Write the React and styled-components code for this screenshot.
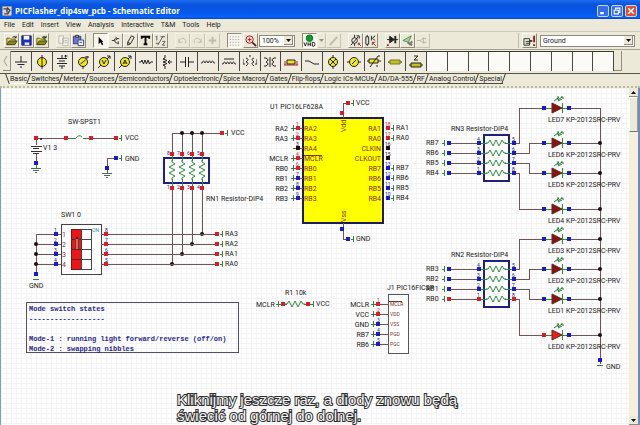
import React, { useState } from 'react';
import styled, { createGlobalStyle, ThemeProvider, css } from 'styled-components';

const theme = {
    fonts: {
        ui: 'Roboto, "Liberation Sans", sans-serif',
        title: '"Open Sans", "Noto Sans", sans-serif',
        note: '"Liberation Mono", monospace',
        caption: '"Liberation Sans", Arial, sans-serif',
    },
    colors: {
        face: '#ece9d8',
        shadow: '#8f8c7c',
        wire: '#6e5555',
        navy: '#20207c',
        green: '#2a8a3c',
        red: '#dd1a26',
        blue: '#1a1ac8',
    },
};

const { wire: WIRE, navy: NAVY, green: GREEN, red: RED, blue: BLUE } = theme.colors;
const BLACK = '#1c1014';

const GlobalStyle = createGlobalStyle`
    * { box-sizing: border-box; }
    body { margin: 0; overflow: hidden; }
    button, select { font: inherit; color: inherit; margin: 0; padding: 0; border: 0; background: none; }
    svg { display: block; }
`;

const Window = styled.div`
    position: relative;
    display: flex;
    flex-direction: column;
    height: 100vh;
    font: 7px/10px ${({ theme }) => theme.fonts.ui};
    color: #1a1a1a;
    background: ${({ theme }) => theme.colors.face};
`;

const TitleBar = styled.header`
    display: flex;
    align-items: center;
    gap: 2px;
    height: 19px;
    padding: 2px 3px 0 2px;
    background: linear-gradient(#1c6cf0, #0a52dc 25%, #0558ec 70%, #0a62fa 90%, #0344c4);
`;

const Title = styled.h1`
    flex: 1;
    margin: 0;
    padding-left: 1px;
    font: bold 8px/12px ${({ theme }) => theme.fonts.title};
    color: white;
    white-space: nowrap;
`;

const WindowButton = styled.button`
    width: 12px;
    height: 12px;
    border: 1px solid #c6d6f8 !important;
    border-radius: 2px;
    background: ${({ $close }) => ($close ? '#dc5230' : '#3a6ce4')} !important;
`;

const MenuBar = styled.nav`
    display: flex;
    gap: 7px;
    height: 12px;
    padding-left: 4px;
`;

const Toolbar = styled.div`
    display: flex;
    align-items: center;
    height: 19px;
    padding: 0 5px 0 4px;
    border-top: 1px solid #cdc9b8;
    border-bottom: 1px solid #a5a292;
`;

const Group = styled.div`
    display: flex;
    align-items: center;
    gap: ${({ $gap = 0 }) => $gap}px;
    margin-right: 7px;
`;

const RightGroup = styled(Group)`
    margin: 0 0 0 auto;
    padding-left: 3px;
    border-left: 1px solid #c0bcaa;
`;

const ToolButton = styled.button`
    display: grid;
    place-items: center;
    width: ${({ $narrow }) => ($narrow ? 9 : 15)}px;
    height: 15px;
    border-style: solid !important;
    border-width: 1px !important;
    border-color: #fbfaf4 #8f8c7c #8f8c7c #fbfaf4 !important;
    ${({ $pressed }) => $pressed && css`
        border-color: #8f8c7c #fbfaf4 #fbfaf4 #8f8c7c !important;
        background: #f6f4ec !important;
    `}
    ${({ $dim }) => $dim && css`opacity: 0.4;`}
`;

const Combo = styled.label`
    display: flex;
    align-items: center;
    width: ${({ $wide }) => ($wide ? 95 : 36)}px;
    height: 12px;
    padding: 0 1px;
    border: 1px solid #8d8a7e;
    background: white;

    select {
        flex: 1;
        min-width: 0;
        height: 10px;
        padding-left: 1px;
        appearance: none;
        outline: none;
    }
`;

const ComboArrow = styled.span`
    display: grid;
    place-items: center;
    width: 9px;
    height: 9px;
    border-right: 1px solid #8d8a7e;
    border-bottom: 1px solid #8d8a7e;
    background: ${({ theme }) => theme.colors.face};
`;

const Palette = styled.div`
    display: flex;
    height: 24px;
    padding: 1px 18px 2px 3px;
    border-bottom: 1px solid #55534a;
`;

const PaletteScroll = styled.button`
    width: 8px;
    border-right: 1px solid #8f8c7c !important;
    border-bottom: 1px solid #8f8c7c !important;
    color: #a29f8e;
`;

const Cells = styled.div`
    flex: 1;
    display: flex;
    border-top: 1px solid #3c3a34;
`;

const Cell = styled.button`
    flex: 1;
    display: grid;
    place-items: center;
    border-right: 1px solid #4a4842 !important;
    background: ${({ $empty }) => ($empty ? '#fbfaf6' : '#efecdf')} !important;
`;

const Tabs = styled.div`
    display: flex;
    height: 14px;
    padding: 0 0 2px 7px;
    border-bottom: 2px dotted #bcb99c;
`;

const Tab = styled.button`
    position: relative;
    height: 10px;
    padding: 0 1px 0 3px !important;
    border-bottom: 1px solid ${({ $active }) => ($active ? 'white' : '#4a4842')} !important;
    white-space: nowrap;
    line-height: 10px !important;

    &::after {
        content: '';
        position: absolute;
        right: -1px;
        top: 0;
        height: 10px;
        border-left: 1px solid #3a3832;
        transform: skewX(-20deg);
    }
    ${({ $active }) => $active && css`
        &::before {
            content: '';
            position: absolute;
            left: 0;
            top: 0;
            height: 10px;
            border-left: 1px solid #3a3832;
            transform: skewX(20deg);
        }
    `}
`;

const Workspace = styled.main`
    flex: 1;
    min-height: 0;
    display: flex;
    border-left: 1px solid #7ba0bc;
    border-right: 2px solid #7089bf;
`;

const Sheet = styled.div`
    position: relative;
    flex: 1;
    min-width: 0;
    overflow: hidden;
    background: #fefefe;
    background-image:
        linear-gradient(#f3f3f3 1px, transparent 1px),
        linear-gradient(90deg, #f3f3f3 1px, transparent 1px);
    background-size: 5px 5px;
`;

const Note = styled.pre`
    position: absolute;
    left: 25px;
    top: 214px;
    width: 213px;
    height: 51px;
    margin: 0;
    padding: 1px 2px;
    border: 1px solid #55505e;
    font: bold 7px/10px ${({ theme }) => theme.fonts.note};
    color: #28288c;
`;

const ScrollBar = styled.div`
    display: flex;
    flex-direction: column;
    width: 9px;
    background: #f5efdc;
`;

const ScrollButton = styled.button`
    display: grid;
    place-items: center;
    height: 9px;
    border-bottom: 1px solid #8f8c7c !important;
    background: #ece9d8 !important;
`;

const Thumb = styled.div`
    height: 35px;
    margin-bottom: auto;
    border: 1px solid;
    border-color: #ffffff #a09d8c #77756a #ffffff;
    background: #ece9d8;
`;

const Caption = styled.p`
    position: absolute;
    left: 177px;
    bottom: 1px;
    margin: 0;
    font: 15px/16px ${({ theme }) => theme.fonts.caption};
    color: #f4f4f4;
    -webkit-text-stroke: 2px #2c2c2c;
    paint-order: stroke fill;
`;

// small icons, all on a 14 unit grid

const Icon = ({ size = 13, children }) => (
    <svg width={size} height={size} viewBox="0 0 14 14" fill="none" stroke="#222" aria-hidden="true">
        {children}
    </svg>
);

const Arrow = ({ up }) => (
    <svg width="5" height="3" viewBox="0 0 5 3" aria-hidden="true">
        <path d={up ? 'M0 3 2.500 0 5 3z' : 'M0 0h5L2.500 3z'} fill="#111" />
    </svg>
);

const Folder = () => (
    <>
        <path d="M2 11.500V4.500h3l1 1h5v2" fill="#f0dc50" stroke="#5a5a18" />
        <path d="M2 11.500 4.500 7.500h8.500L10.500 11.500z" fill="#8a8a20" stroke="#3c3c10" />
        <path d="M8 3.500q2.500-2 4 .5m0-2v2h-2" stroke="#222" />
    </>
);

const TOOL_ICONS = {
    open: <Folder />,
    save: (
        <>
            <path d="M2 2h10v10H2z" fill="#1830c0" stroke="#101c70" />
            <path d="M4 2h6v4H4z" fill="#fff" stroke="none" />
            <path d="M5 9h5v3H5z" fill="#ddd" stroke="none" />
        </>
    ),
    reopen: (
        <>
            <Folder />
            <path d="M7 3h4v4z" fill="#287828" stroke="none" />
        </>
    ),
    copy: <path d="M2 2h5v8H2zM6 4.500h6v8H6zM8 7h3M8 9h3" fill="#fff" stroke="#777" />,
    paste: (
        <>
            <path d="M1.500 2.500h8v8h-8z" fill="#6c78c8" stroke="#303880" />
            <path d="M4 1.500h3v2H4z" fill="#eee" />
            <path d="M6.500 6.500h6v6h-6zM8 9h3" fill="#fff" stroke="#2838a0" />
        </>
    ),
    pointer: <path d="M5 3v8l2-2 1.500 3 1.500-1-1.500-2.500H10z" fill="#000" stroke="none" />,
    gate: <path d="M3 7h3M11 5H8Q5 5 6 7q0 3 4 3M7 3l2 2-2 2M10 8v3" stroke="#333" />,
    pencil: <path d="M4 12V9l4-7 3 1.500-4 7zM4 9l3 1.500" fill="#e8e4d0" />,
    text: <path d="M3 5V3h8v2M7 3v8M5 11h4" stroke="#000" strokeWidth="2" />,
    ratio: <path d="M2 3l1-1v5M10 2 4 12M9 8h3l-3 4h3M7 3h5M2 10h3" stroke="#555" />,
    undo: <path d="M3 5v4h4M3 9q2-6 6-4 3 2 1 5" stroke="#777" />,
    redo: <path d="M11 5v4H7M11 9Q9 3 5 5q-3 2-1 5" stroke="#777" />,
    plus: <path d="M7 3v8M3 7h8" stroke="#777" strokeWidth="2" />,
    grid: <path d="M2 3h11M2 6h11M2 9h11M2 12h11" stroke="#888" strokeDasharray="1 2" />,
    zoom: (
        <>
            <circle cx="6" cy="6" r="4" fill="#f4d8d8" stroke="#8c2020" />
            <path d="M4 6h4M6 4v4" stroke="#c01818" />
            <path d="M9 9l4 4" stroke="#602020" strokeWidth="2" />
        </>
    ),
    vhd: (
        <>
            <circle cx="7" cy="4.500" r="3.500" fill="#0c9c30" stroke="#0a6c20" />
            <path d="M1 9l1.500 4L4 9M5.500 9v4M8 9v4M5.500 11H8M10 9v4h2l1-2-1-2z" stroke="#222" />
        </>
    ),
    probe: <path d="M3 12 11 3" stroke="#777" strokeWidth="2" />,
    meter: (
        <>
            <circle cx="6" cy="7" r="3" />
            <path d="M2 12 10 3M8 2h3v3M6 1v3M6 10v3" />
            <path d="M10 10l3 3M10 12v-2h2" stroke="#a82828" />
        </>
    ),
    resistorTool: (
        <>
            <path d="M2 3h3v8H2zM3.500 1v2M3.500 11v2M8 2v5M12 2 9 4.500 12 7" />
            <path d="M9 9l4 4M9 12V9h3" stroke="#a82828" />
        </>
    ),
    diodeTool: (
        <>
            <path d="M1 6h12" />
            <path d="M4 2.500v7L9 6z" fill="#222" />
            <path d="M10 2v8" strokeWidth="2" />
            <path d="M1 11h2v2H1z" fill="#c81c1c" stroke="none" />
        </>
    ),
    brush: (
        <>
            <path d="M2 7 11 2 8 9z" fill="#aad0a4" stroke="#5a8a54" />
            <path d="M7 9l5 3M9 12l3-4" stroke="#777" strokeWidth="2" />
        </>
    ),
    lamp: <path d="M1 7h4l3-3v6L5 7M8 5h3M8 9h3" stroke="#666" />,
    hand: (
        <>
            <path d="M1 5h6v7H1zM7 7h3M3 8h7M3 10h5" stroke="#333" />
            <path d="M12 2v7M12 11v2" stroke="#7c2020" strokeWidth="2" />
        </>
    ),
};

const YELLOW = '#f2e818';

const PALETTE = [
    ['Ground', <path d="M7 1v6M1 7h12M3.500 9.500h7M6 12h2" />],
    ['Voltage source', <><circle cx="7" cy="7" r="4.500" fill={YELLOW} /><path d="M7 0v14" /></>],
    ['Battery', <path d="M7 0v3M2 3.500h10M4 6h6M2 8.500h10M4 11h6M7 11v3M10.500 0v2.500M9.500 1h3" />],
    ['Generator', <><circle cx="7" cy="7" r="4.500" fill={YELLOW} /><path d="M4.500 9 9.500 5M11 1v3M9 2h4M7 11v3" /></>],
    ['Voltmeter', <><circle cx="7" cy="7" r="4.500" fill={YELLOW} /><path d="M5 5l2 4 2-4M1 13l3-3M10 4l3-3M10 1h3v3" /></>],
    ['Ammeter', <><circle cx="7" cy="7" r="4.500" fill={YELLOW} /><path d="M5 9l2-4 2 4M6 8h2M1 13l3-3M10 4l3-3M10 1h3v3" /></>],
    ['Resistor', <path d="M0 7h2l1-2 1.500 4L6 5l1.500 4L9 5l1.500 4 1-2H14" />],
    ['Potentiometer', <path d="M6 0v3l-2 1 4 1.500L4 7l4 1.500L4 10l2 1v3M13 7H9M11 5 9 7l2 2" />],
    ['Capacitor', <path d="M0 7h5.500M8.500 7H14M5.500 2v10M8.500 2v10" />],
    ['Inductor', <path d="M0 8h1q1.500-4 3 0 1.500-4 3 0 1.500-4 3 0 1.500-4 3 0h1" />],
    ['Core inductor', <path d="M0 9h1q1.500-4 3 0 1.500-4 3 0 1.500-4 3 0 1.500-4 3 0h1M2 4h10" />],
    ['Coupled inductors', <path d="M0 4v5h2M3 3q4 1 0 4 4 1 0 4M11 3q-4 1 0 4-4 1 0 4M14 4v5h-2M6 1h2" />],
    ['Transformer', <path d="M1 3h2q4 2 0 4 4 2 0 4H1M13 3h-2q-4 2 0 4-4 2 0 4h2M7 2v10" />],
    ['Relay', <><path d="M0 10h14M1 10V6M13 10V6" stroke="#a82020" /><path d="M3 5h8v4H3z" fill={YELLOW} /></>],
    ['Switch', <path d="M0 6h4l5 3M9 9h5" />],
    ['Lamp', <><circle cx="7" cy="7" r="4.500" fill={YELLOW} /><path d="M4 4l6 6M10 4l-6 6M7 0v2M7 12v2" /></>],
    ['Motor', <><path d="M0 7h14" /><circle cx="7" cy="7" r="4.500" fill={YELLOW} /><path d="M5 9 9 5" /></>],
    ['Thermistor', <><path d="M0 6h14" /><path d="M2 4h9v4H2z" fill={YELLOW} /><path d="M3 12 11 1h2M10 12v-2" /></>],
    ['Fuse', <><path d="M0 7h14" /><path d="M2 5h10v4H2z" fill="#c4c020" stroke="#77741c" /></>],
    ['Impedance', <><path d="M0 10h14" /><path d="M2 8h10v4H2z" fill="#c4c020" /><path d="M5 1h4L5 5h4" /></>],
];

const MENUS = ['File', 'Edit', 'Insert', 'View', 'Analysis', 'Interactive', 'T&M', 'Tools', 'Help'];

const TABS = [
    'Basic', 'Switches', 'Meters', 'Sources', 'Semiconductors', 'Optoelectronic', 'Spice Macros',
    'Gates', 'Flip-flops', 'Logic ICs-MCUs', 'AD/DA-555', 'RF', 'Analog Control', 'Special',
];

// schematic parts

const Label = styled.text`
    font: ${({ $size = 7 }) => $size}px ${({ theme }) => theme.fonts.ui};
    fill: ${({ $color = '#222' }) => $color};
    text-anchor: ${({ $end }) => ($end ? 'end' : 'start')};
`;

const Wire = styled.path`
    fill: none;
    stroke: ${({ $color = WIRE }) => $color};
    stroke-width: ${({ $width = 1 }) => $width};
    shape-rendering: ${({ $smooth }) => ($smooth ? 'auto' : 'crispEdges')};
`;

const Pin = ({ x, y, color = BLUE }) => (
    <rect x={x - 2} y={y - 2} width="4" height="4" fill={color} />
);

const Joint = ({ x, y }) => <circle cx={x} cy={y} r="2" fill={BLACK} />;

const Tick = ({ x, y }) => <Wire d={`M${x} ${y - 3}v6M${x - 2} ${y}h2`} $color={GREEN} />;

const Ground = ({ x, y }) => (
    <Wire d={`M${x - 5} ${y}h10M${x - 3} ${y + 2}h6M${x - 1} ${y + 4}h2`} $color="#4a6a50" />
);

const Zigzag = ({ x, y, vertical }) => (
    <g transform={vertical ? `translate(${x} ${y}) rotate(90)` : `translate(${x} ${y})`}>
        <Wire d="M-1 0h2l2-3 3 6 3-6 3 6 3-6 2 3h2" $color={GREEN} $smooth />
    </g>
);

const PinNumber = ({ x, y, color = NAVY, children }) => (
    <Label x={x} y={y} $size={5} $color={color}>{children}</Label>
);

const LEDS = [
    [108, 'LED7'], [143, 'LED6'], [173, 'LED5'], [209, 'LED4'],
    [239, 'LED3'], [269, 'LED2'], [299, 'LED1'], [335, 'LED0'],
];

const Led = ({ y, name }) => {
    const lit = name === 'LED0';
    return (
        <g>
            <Wire d={`M569 ${y}h31`} />
            <Wire d={`M544 ${y}h25`} $color={GREEN} />
            <path d={`M552 ${y - 5}v10l10-5z`} fill={lit ? '#f01c1c' : '#8c1010'} stroke="#5c2c1c" strokeWidth="1" />
            <Wire d={`M562 ${y - 5}v10`} $color={GREEN} />
            <Wire
                d={`M554 ${y - 7}l4-3v2l4-3M557 ${y - 11}h2l-2 2M561 ${y - 11}h2v2M558 ${y - 7}l4-2`}
                $color="#1e7a30"
                $smooth
            />
            <Pin x={544} y={y} color={lit ? RED : BLUE} />
            <Pin x={569} y={y} />
            {y > 108 && <Joint x={600} y={y} />}
            <Label x={548} y={y + 14}>{`${name} KP-2012SRC-PRV`}</Label>
        </g>
    );
};

// four resistors in one package, with the nets that feed it and the leads to its LEDs
const ResistorPack = ({ top, name, nets, hot, leds }) => (
    <g>
        <Label x={451} y={top - 4}>{name}</Label>
        <rect x="484" y={top} width="25" height="46" fill="#fff" stroke={NAVY} strokeWidth="2" />
        {nets.map((net, i) => {
            const y = top + 8 + i * 10;
            const color = net === hot ? RED : BLUE;
            return (
                <g key={net}>
                    <Label x={426} y={y + 2}>{net}</Label>
                    <Tick x={444} y={y} />
                    <Wire d={`M449 ${y}h30`} />
                    <Wire d={`M479 ${y}h8M505 ${y}h9`} $color={GREEN} />
                    <Zigzag x={487} y={y} />
                    <Wire d={`M514 ${y}H${i === 0 || i === 3 ? 519 : 529}V${leds[i]}H544`} />
                    <Pin x={449} y={y} color={color} />
                    <Pin x={479} y={y} color={color} />
                    <Pin x={514} y={y} color={color} />
                    <PinNumber x={477} y={y - 2}>{4 - i}</PinNumber>
                    <PinNumber x={512} y={y - 2}>{i + 5}</PinNumber>
                </g>
            );
        })}
    </g>
);

const CHIP_LEFT = [
    ['RA2', RED, 1], ['RA3', RED, 2], ['RA4', BLACK, 3], ['MCLR', RED, 4],
    ['RB0', RED, 6], ['RB1', BLUE, 7], ['RB2', BLUE, 8], ['RB3', BLUE, 9],
];
const CHIP_RIGHT = [
    ['RA1', RED, 18], ['RA0', RED, 17], ['CLKIN', BLACK, 16], ['CLKOUT', BLACK, 15],
    ['RB7', BLUE, 13], ['RB6', BLUE, 12], ['RB5', BLUE, 11], ['RB4', BLUE, 10],
];

const Chip = () => (
    <g>
        <Label x={270} y={109}>U1 PIC16LF628A</Label>
        <rect x="303" y="118" width="80" height="105" fill="#ffff00" stroke="#1c1c5c" strokeWidth="2" />
        <Wire d="M343 118v-15h5M343 223v16h5" />
        <Pin x={342} y={113} color={RED} />
        <Pin x={348} y={103} color={RED} />
        <Tick x={353} y={103} />
        <Label x={356} y={105}>VCC</Label>
        <Pin x={342} y={229} />
        <Pin x={348} y={239} />
        <Tick x={353} y={239} />
        <Label x={356} y={241}>GND</Label>
        <Label $color="#7c3414" transform="translate(346 132) rotate(-90)">Vdd</Label>
        <Label $color="#7c3414" transform="translate(346 222) rotate(-90)">Vss</Label>
        {CHIP_LEFT.map(([pin, color, number], i) => {
            const y = 128 + i * 10;
            return (
                <g key={pin}>
                    {color !== BLACK && <Tick x={293} y={y} />}
                    {color !== BLACK && <Label x={288} y={y + 3} $end>{pin}</Label>}
                    <Wire d={`M293 ${y}h10`} />
                    <Pin x={298} y={y} color={color} />
                    <PinNumber x={296} y={y - 2} color={color}>{number}</PinNumber>
                    <Label x={304} y={y + 3} $color="#84300c">{pin}</Label>
                </g>
            );
        })}
        <Wire d="M304 155h18" $color="#84300c" />
        {CHIP_RIGHT.map(([pin, color, number], i) => {
            const y = 128 + i * 10;
            return (
                <g key={pin}>
                    {color !== BLACK && <Tick x={393} y={y} />}
                    {color !== BLACK && <Label x={396} y={y + 2}>{pin}</Label>}
                    <Pin x={388} y={y} color={color} />
                    <PinNumber x={385} y={y - 2} color={color}>{number}</PinNumber>
                    <Label x={381} y={y + 3} $color="#84300c" $end>{pin}</Label>
                </g>
            );
        })}
    </g>
);

const Supply = () => (
    <g>
        <Label x={68} y={124}>SW-SPST1</Label>
        <Wire d="M36 138h30M91 138h25M36 138v7M36 154v9" />
        <Wire d="M66 138h10M83 138h8M36 163v5" $color={GREEN} />
        <Wire d="M76 138q3-4 6-1" $color={GREEN} $smooth />
        <circle cx="41" cy="139" r="1" fill={BLACK} />
        <Wire d="M31 146h11M33 148h6M31 151h11M33 153h6" $color="#333" />
        <Pin x={36} y={138} color={RED} />
        <Pin x={66} y={138} color={RED} />
        <Pin x={91} y={138} color={RED} />
        <Pin x={116} y={138} color={RED} />
        <Tick x={121} y={138} />
        <Label x={125} y={140}>VCC</Label>
        <Label x={43} y={150}>V1 3</Label>
        <Pin x={36} y={163} />
        <Ground x={36} y={168} />
        <Wire d="M116 158h-9v15" />
        <Pin x={116} y={158} />
        <Pin x={107} y={168} />
        <Tick x={121} y={158} />
        <Label x={125} y={161}>GND</Label>
        <Ground x={107} y={173} />
    </g>
);

const PullUps = () => (
    <g>
        <Wire d="M172 133h50M172 133v131M182 133v121M192 133v111M202 133v101" />
        <rect x="164" y="158" width="45" height="25" fill="#fff" stroke={NAVY} strokeWidth="2" />
        {[172, 182, 192, 202].map((x, i) => (
            <g key={x}>
                <Wire d={`M${x} 154v7M${x} 179v9`} $color={GREEN} />
                <Zigzag x={x} y={161} vertical />
                <Pin x={x} y={154} color={RED} />
                <Pin x={x} y={188} color={RED} />
                <PinNumber x={x - 5} y={155}>{8 - i}</PinNumber>
                <PinNumber x={x - 5} y={189}>{i + 1}</PinNumber>
                {i > 0 && <Joint x={x} y={133} />}
                <Joint x={x} y={264 - i * 10} />
            </g>
        ))}
        <Pin x={222} y={133} color={RED} />
        <Tick x={227} y={133} />
        <Label x={231} y={135}>VCC</Label>
        <Label x={206} y={201}>RN1 Resistor-DIP4</Label>
    </g>
);

const DipSwitch = () => (
    <g>
        <Label x={61} y={217}>SW1 0</Label>
        <rect x="61" y="224" width="40" height="50" fill="#fff" stroke="#444" shapeRendering="crispEdges" />
        <Wire d="M36 234v40" />
        <Label x={92} y={232} $size={5} $color="#20908c">ON</Label>
        {['RA3', 'RA2', 'RA1', 'RA0'].map((net, i) => {
            const y = 234 + i * 10;
            return (
                <g key={net}>
                    <Wire d={`M36 ${y}h25M101 ${y}h116`} />
                    <rect x="71" y={y - 5} width="10" height="10" fill="#f01414" stroke="#6a1c1c" shapeRendering="crispEdges" />
                    <rect x="81" y={y - 5} width="10" height="10" fill="#fff" stroke="#444" shapeRendering="crispEdges" />
                    <Label x={62} y={y + 3} $color="#7a3030">{i + 1}</Label>
                    <PinNumber x={54} y={y - 2}>{i + 1}</PinNumber>
                    <PinNumber x={105} y={y - 2}>{8 - i}</PinNumber>
                    <Pin x={56} y={y} />
                    <Pin x={106} y={y} color={RED} />
                    <Pin x={217} y={y} color={RED} />
                    <Tick x={222} y={y} />
                    <Label x={225} y={y + 2}>{net}</Label>
                    {i > 0 && <Joint x={36} y={y} />}
                </g>
            );
        })}
        <path d="M75 239h4v1h-1v8h1v1h-4v-1h1v-8h-1z" fill="#e8c8a8" stroke="#6a3030" strokeWidth="1" />
        <circle cx="77" cy="238" r="1" fill="#222" />
        <Pin x={36} y={274} />
        <Wire d="M33 279h6" $color={GREEN} />
        <Label x={29} y={288}>GND</Label>
    </g>
);

const HEADER = [
    ['MCLR', 'MCLR', RED], ['VCC', 'VDD', RED], ['GND', 'VSS', BLUE], ['RB7', 'PGD', BLUE], ['RB6', 'PGC', BLUE],
];

const Programmer = () => (
    <g>
        <Label x={285} y={295}>R1 10k</Label>
        <Label x={256} y={307}>MCLR</Label>
        <Tick x={278} y={304} />
        <Wire d="M278 304h9M304 304h10" $color={GREEN} />
        <Zigzag x={286} y={304} />
        <Pin x={283} y={304} color={RED} />
        <Pin x={308} y={304} color={RED} />
        <Tick x={313} y={304} />
        <Label x={316} y={306}>VCC</Label>

        <Label x={387} y={290}>J1 PIC16FICSP</Label>
        <rect x="388" y="294" width="20" height="59" fill="#fff" stroke="#555" shapeRendering="crispEdges" />
        {HEADER.map(([net, pin, color], i) => {
            const y = 304 + i * 10;
            return (
                <g key={net}>
                    <Label x={369} y={y + 3} $end>{net}</Label>
                    <Tick x={373} y={y} />
                    <Wire d={`M373 ${y}h16`} />
                    <Pin x={378} y={y} color={color} />
                    <PinNumber x={377} y={y - 2} color={color}>{i + 1}</PinNumber>
                    <Label x={390} y={y + 2} $size={5} $color="#703030">{pin}</Label>
                </g>
            );
        })}
        <Wire d="M389 301h13" $color="#703030" />
    </g>
);

const Schematic = () => (
    <svg width="628" height="337" viewBox="1 88 628 337" role="img" aria-label="PIC flasher schematic">
        <Supply />
        <PullUps />
        <DipSwitch />
        <Chip />
        <Programmer />
        <ResistorPack top={135} name="RN3 Resistor-DIP4" nets={['RB7', 'RB6', 'RB5', 'RB4']} leds={[108, 143, 173, 209]} />
        <ResistorPack top={261} name="RN2 Resistor-DIP4" nets={['RB3', 'RB2', 'RB1', 'RB0']} leds={[239, 269, 299, 335]} hot="RB0" />
        <Wire d="M600 108v256" />
        {LEDS.map(([y, name]) => <Led key={name} y={y} name={name} />)}
        <Pin x={600} y={360} />
        <Wire d="M597 365h6" $color={GREEN} />
        <Label x={606} y={369}>GND</Label>
    </svg>
);

const NOTE = `Mode switch states
------------------

Mode-1 : running light forward/reverse (off/on)
Mode-2 : swapping nibbles`;

const Tool = ({ icon, ...rest }) => (
    <ToolButton type="button" aria-label={icon} {...rest}>
        <Icon>{TOOL_ICONS[icon]}</Icon>
    </ToolButton>
);

function App() {
    const [activeTab, setActiveTab] = useState('Basic');

    return (
        <ThemeProvider theme={theme}>
            <GlobalStyle />
            <Window>
                <TitleBar>
                    <Icon size={10}>
                        <path d="M0 0h14v14H0z" fill="#d8d8d0" stroke="#333" />
                        <path d="M2 4h5v5M7 2l4 4-3 5M3 11h6" stroke="#503c5c" strokeWidth="2" />
                    </Icon>
                    <Title>PICFlasher_dip4sw_pcb - Schematic Editor</Title>
                    <WindowButton type="button" aria-label="Minimize">
                        <Icon size={10}><path d="M3 10h5" stroke="#fff" strokeWidth="3" /></Icon>
                    </WindowButton>
                    <WindowButton type="button" aria-label="Restore">
                        <Icon size={10}><path d="M5 5V3h6v6H9M3 6h6v5H3z" stroke="#fff" strokeWidth="1.500" /></Icon>
                    </WindowButton>
                    <WindowButton type="button" aria-label="Close" $close>
                        <Icon size={10}><path d="M3 3l8 8M11 3l-8 8" stroke="#fff" strokeWidth="2" /></Icon>
                    </WindowButton>
                </TitleBar>

                <MenuBar>
                    {MENUS.map((menu) => <button type="button" key={menu}>{menu}</button>)}
                </MenuBar>

                <Toolbar>
                    <Group>
                        <Tool icon="open" />
                        <Tool icon="save" />
                        <Tool icon="reopen" />
                    </Group>
                    <Group>
                        <Tool icon="copy" $dim />
                        <Tool icon="paste" />
                    </Group>
                    <Group>
                        <Tool icon="pointer" $pressed />
                        <Tool icon="gate" />
                        <Tool icon="pencil" />
                        <Tool icon="text" />
                        <Tool icon="ratio" />
                    </Group>
                    <Group>
                        <Tool icon="undo" $dim />
                        <Tool icon="redo" $dim />
                        <Tool icon="plus" $dim />
                    </Group>
                    <Group $gap={1}>
                        <Tool icon="grid" $pressed />
                        <Tool icon="zoom" />
                        <Combo>
                            <select aria-label="Zoom" defaultValue="100%">
                                <option>50%</option>
                                <option>100%</option>
                                <option>200%</option>
                            </select>
                            <ComboArrow><Arrow /></ComboArrow>
                        </Combo>
                    </Group>
                    <Group>
                        <Tool icon="vhd" $pressed />
                        <ToolButton type="button" aria-label="VHD options" $narrow $dim><Arrow /></ToolButton>
                        <Tool icon="probe" $dim />
                    </Group>
                    <Group>
                        <Tool icon="meter" />
                        <Tool icon="resistorTool" />
                    </Group>
                    <Group>
                        <Tool icon="diodeTool" />
                        <Tool icon="brush" />
                        <Tool icon="lamp" $dim />
                    </Group>
                    <RightGroup $gap={3}>
                        <Tool icon="hand" />
                        <Combo $wide>
                            <select aria-label="Component" defaultValue="Ground">
                                <option>Ground</option>
                                <option>Battery</option>
                                <option>Resistor</option>
                            </select>
                            <ComboArrow><Arrow /></ComboArrow>
                        </Combo>
                    </RightGroup>
                </Toolbar>

                <Palette>
                    <PaletteScroll type="button" aria-label="Scroll left">
                        <svg width="5" height="16" viewBox="0 0 5 16" fill="none" stroke="currentColor"><path d="M4 3 1 8l3 5" /></svg>
                    </PaletteScroll>
                    <Cells>
                        {PALETTE.map(([name, drawing]) => (
                            <Cell type="button" key={name} aria-label={name}><Icon size={14}>{drawing}</Icon></Cell>
                        ))}
                        {Array.from({ length: 9 }, (_, i) => <Cell type="button" key={i} aria-label="Empty slot" $empty />)}
                    </Cells>
                    <PaletteScroll type="button" aria-label="Scroll right" />
                </Palette>

                <Tabs role="tablist">
                    {TABS.map((tab) => (
                        <Tab
                            type="button"
                            role="tab"
                            key={tab}
                            aria-selected={tab === activeTab}
                            $active={tab === activeTab}
                            onClick={() => setActiveTab(tab)}
                        >
                            {tab}
                        </Tab>
                    ))}
                </Tabs>

                <Workspace>
                    <Sheet>
                        <Schematic />
                        <Note>{NOTE}</Note>
                    </Sheet>
                    <ScrollBar>
                        <ScrollButton type="button" aria-label="Scroll up"><Arrow up /></ScrollButton>
                        <Thumb />
                        <ScrollButton type="button" aria-label="Scroll down"><Arrow /></ScrollButton>
                    </ScrollBar>
                </Workspace>

                <Caption>
                    Kliknijmy jeszcze raz, a diody znowu będą<br />
                    świecić od górnej do dolnej.
                </Caption>
            </Window>
        </ThemeProvider>
    );
}

export default App;
